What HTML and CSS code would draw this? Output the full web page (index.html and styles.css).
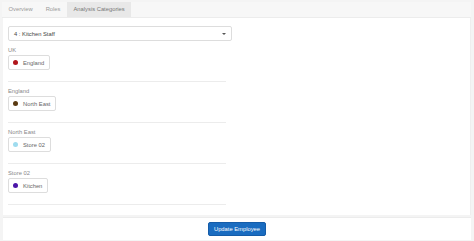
FILE: index.html
```html
<!DOCTYPE html>
<html lang="en">
<head>
    <meta charset="UTF-8">
    <title>Edit Employee</title>
    <link rel="stylesheet" href="styles.css">
</head>
<body>
    <div class="page">
        <ul class="tabs">
            <li>Overview</li>
            <li>Roles</li>
            <li class="active">Analysis Categories</li>
        </ul>

        <div class="panel">
            <div class="select">
                <span>4 : Kitchen Staff</span>
                <span class="caret"></span>
            </div>

            <div class="group">
                <div class="group-label">UK</div>
                <span class="chip"><span class="dot" style="background:#b0151b"></span>England</span>
            </div>
            <div class="group">
                <div class="group-label">England</div>
                <span class="chip"><span class="dot" style="background:#5a3a12"></span>North East</span>
            </div>
            <div class="group">
                <div class="group-label">North East</div>
                <span class="chip"><span class="dot" style="background:#9fdcef"></span>Store 02</span>
            </div>
            <div class="group">
                <div class="group-label">Store 02</div>
                <span class="chip"><span class="dot" style="background:#4b16a8"></span>Kitchen</span>
            </div>
        </div>

        <div class="footer">
            <button>Update Employee</button>
        </div>
    </div>
</body>
</html>
```

FILE: styles.css
```css
body {
    margin: 0;
    font-family: "Liberation Sans", Arial, sans-serif;
    font-size: 5.8px;
    color: #666;
    background: #f4f4f4;
}
.page {
    margin: 2px 3px 0 3px;
    width: 468px;
}
.tabs {
    list-style: none;
    margin: 0 0 0 -1px;
    padding: 0;
    display: flex;
    height: 15px;
    background: #f7f7f7;
    border-bottom: 1px solid #ececec;
}
.tabs li {
    padding: 0 6.5px;
    line-height: 15px;
    color: #999;
}
.tabs li.active {
    background: #e8e8e8;
    color: #777;
}
.panel {
    background: #fff;
    padding: 8px 244px 10px 5px;
    border-right: 1px solid #eee;
}
.select {
    height: 13px;
    border: 1px solid #ddd;
    border-radius: 2px;
    display: flex;
    align-items: center;
    justify-content: space-between;
    padding: 0 5px 0 5px;
    color: #444;
    margin-right: -6px;
}
.caret {
    width: 0;
    height: 0;
    border-left: 2px solid transparent;
    border-right: 2px solid transparent;
    border-top: 2px solid #555;
}
.group {
    padding: 5px 0 11px;
    border-bottom: 1px solid #ececec;
}
.group-label {
    color: #888;
    line-height: 8px;
    margin-bottom: 1px;
}
.chip {
    display: inline-flex;
    align-items: center;
    height: 13px;
    padding: 0 5px 0 4px;
    border: 1px solid #ddd;
    border-radius: 2px;
    color: #666;
}
.dot {
    width: 5px;
    height: 5px;
    border-radius: 50%;
    margin-right: 5px;
}
.footer {
    margin-top: 2px;
    height: 22px;
    background: #fff;
    border-top: 1px solid #ececec;
    display: flex;
    align-items: center;
    justify-content: center;
}
.footer button {
    background: #1a6cc0;
    color: #fff;
    border: 1px solid #155ca8;
    border-radius: 2px;
    font-family: "Liberation Sans", Arial, sans-serif;
    font-size: 5.8px;
    padding: 0 5px;
    height: 14px;
    cursor: pointer;
}
```
